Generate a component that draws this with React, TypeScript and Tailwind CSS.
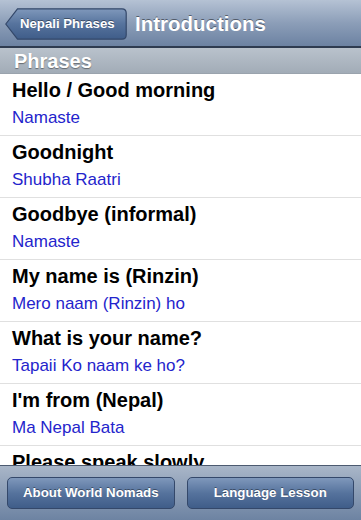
import React from "react";

const rows: [string, string][] = [
  ["Hello / Good morning", "Namaste"],
  ["Goodnight", "Shubha Raatri"],
  ["Goodbye (informal)", "Namaste"],
  ["My name is (Rinzin)", "Mero naam (Rinzin) ho"],
  ["What is your name?", "Tapaii Ko naam ke ho?"],
  ["I'm from (Nepal)", "Ma Nepal Bata"],
  ["Please speak slowly", ""],
];

export default function App() {
  return (
    <div
      className="w-[361px] h-[520px] flex flex-col overflow-hidden bg-white"
      style={{ fontFamily: '"Liberation Sans", Arial, sans-serif' }}
    >
      {/* nav bar */}
      <div className="h-[48px] shrink-0 flex items-center pt-[2px] bg-gradient-to-b from-[#b5c2d4] via-[#8c9eb8] to-[#6c82a2] border-b-2 border-[#2e3b50]">
        <div className="relative ml-[5px] w-[122px] h-[32px] flex items-center shrink-0">
          <svg className="absolute inset-0" width="122" height="32" viewBox="0 0 122 32">
            <defs>
              <linearGradient id="bb" x1="0" y1="0" x2="0" y2="1">
                <stop offset="0" stopColor="#7f98bb" />
                <stop offset="0.5" stopColor="#56739d" />
                <stop offset="1" stopColor="#3f5d89" />
              </linearGradient>
            </defs>
            <path
              d="M0.8,16 L12.5,0.8 H117 Q121.2,0.8 121.2,5 V27 Q121.2,31.2 117,31.2 H12.5 Z"
              fill="url(#bb)"
              stroke="#34486a"
              strokeWidth="1.2"
            />
          </svg>
          <span className="relative pl-[15px] text-white font-bold text-[13.2px] [text-shadow:0_-1px_0_rgba(0,0,0,0.4)]">
            Nepali Phrases
          </span>
        </div>
        <div className="ml-[8px] text-white font-bold text-[20.5px] [text-shadow:0_-1px_0_rgba(0,0,0,0.45)]">
          Introductions
        </div>
      </div>

      {/* section header */}
      <div className="h-[26px] shrink-0 flex items-center pl-[14px] bg-gradient-to-b from-[#b9c2cc] to-[#a2acb7] border-b border-[#9aa3ad]">
        <span className="text-white font-bold text-[20px] leading-none [text-shadow:0_1px_1px_rgba(0,0,0,0.4)]">
          Phrases
        </span>
      </div>

      {/* list */}
      <div className="flex-1 overflow-hidden">
        {rows.map(([t, s], i) => (
          <div key={i} className="h-[62px] border-b border-[#e0e0e0] pl-[12px] pt-[4px]">
            <div className="text-black font-bold text-[20px] leading-[24px]">{t}</div>
            {s && <div className="mt-[6px] text-[#2424cc] text-[17px] leading-[20px]">{s}</div>}
          </div>
        ))}
      </div>

      {/* toolbar */}
      <div className="h-[55px] shrink-0 flex items-center gap-[12px] px-[7px] bg-gradient-to-b from-[#a9b6c8] via-[#8a9cb5] to-[#6d83a2] border-t border-[#4c5a70]">
        {["About World Nomads", "Language Lesson"].map((b) => (
          <div
            key={b}
            className="flex-1 h-[32px] rounded-[5px] border border-[#34486a] bg-gradient-to-b from-[#7f98bb] via-[#56739d] to-[#3f5d89] flex items-center justify-center text-white font-bold text-[13.3px] [text-shadow:0_-1px_0_rgba(0,0,0,0.4)]"
          >
            {b}
          </div>
        ))}
      </div>
    </div>
  );
}
